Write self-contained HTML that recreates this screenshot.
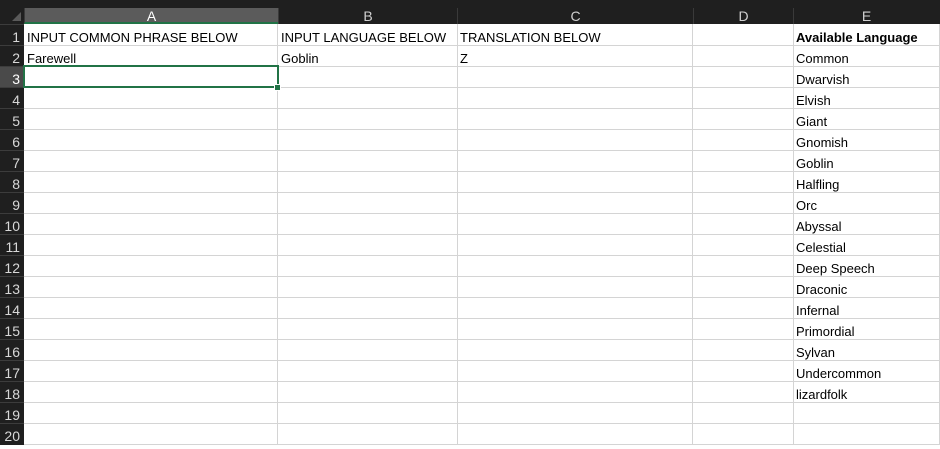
<!DOCTYPE html><html><head><style>
body{margin:0;width:940px;height:445px;background:#fff;font-family:"Liberation Sans",Arial,sans-serif;overflow:hidden;position:relative}
.abs{position:absolute}
.top{left:0;top:0;width:940px;height:24px;background:#1f1f1f}
.ch{top:8px;height:16px;color:#d0d0d0;font-size:14px;line-height:16px;text-align:center;border-left:1px solid #3a3a3a;box-sizing:border-box}
.rh{left:0;width:24px;height:21px;background:#1f1f1f;color:#d8d8d8;font-size:14px;line-height:25px;text-align:right;padding-right:4px;box-sizing:border-box;border-top:1px solid #3c3c3c}
.h{left:24px;width:916px;height:1px;background:#d4d4d4}
.v{top:24px;width:1px;height:421px;background:#d4d4d4}
.t{font-size:13px;color:#000;line-height:21px;white-space:nowrap}
</style></head><body>
<div class="abs top"></div>
<div class="abs" style="left:12px;top:12px;width:0;height:0;border-left:9px solid transparent;border-bottom:9px solid #5a5a5a"></div>
<div class="abs ch" style="left:24px;width:254px;background:#5b5b5b;color:#fff;border-bottom:2px solid #217346;height:16px">A</div>
<div class="abs ch" style="left:278px;width:179px">B</div>
<div class="abs ch" style="left:457px;width:236px">C</div>
<div class="abs ch" style="left:693px;width:100px">D</div>
<div class="abs ch" style="left:793px;width:146px">E</div>
<div class="abs" style="left:0;top:24px;width:24px;height:421px;background:#1f1f1f"></div>
<div id="g"></div>
<div class="abs v" style="left:277px"></div>
<div class="abs v" style="left:457px"></div>
<div class="abs v" style="left:692px"></div>
<div class="abs v" style="left:793px"></div>
<div class="abs v" style="left:939px"></div>
<div class="abs t" style="left:27px;top:27px">INPUT COMMON PHRASE BELOW</div>
<div class="abs t" style="left:281px;top:27px">INPUT LANGUAGE BELOW</div>
<div class="abs t" style="left:460px;top:27px">TRANSLATION BELOW</div>
<div class="abs t" style="left:796px;top:27px;font-weight:bold">Available Language</div>
<div class="abs t" style="left:27px;top:48px">Farewell</div>
<div class="abs t" style="left:281px;top:48px">Goblin</div>
<div class="abs t" style="left:460px;top:48px">Z</div>
<div id="e"></div>
<div class="abs" style="left:23px;top:65px;width:252px;height:19px;border:2px solid #217346"></div>
<div class="abs" style="left:274px;top:84px;width:5px;height:5px;background:#217346;border:1px solid #fff"></div>
<script>
var g='',i;
for(i=1;i<=20;i++){var y=24+(i-1)*21;
g+='<div class="abs rh" style="top:'+y+'px;'+(i==3?'background:#4a4a4a;color:#fff;':'')+'">'+i+'</div>';
g+='<div class="abs h" style="top:'+(y+21)+'px"></div>';}
document.getElementById('g').innerHTML=g;
var L=['Common','Dwarvish','Elvish','Giant','Gnomish','Goblin','Halfling','Orc','Abyssal','Celestial','Deep Speech','Draconic','Infernal','Primordial','Sylvan','Undercommon','lizardfolk'],e='';
for(i=0;i<L.length;i++)e+='<div class="abs t" style="left:796px;top:'+(48+i*21)+'px">'+L[i]+'</div>';
document.getElementById('e').innerHTML=e;
</script>
</body></html>
